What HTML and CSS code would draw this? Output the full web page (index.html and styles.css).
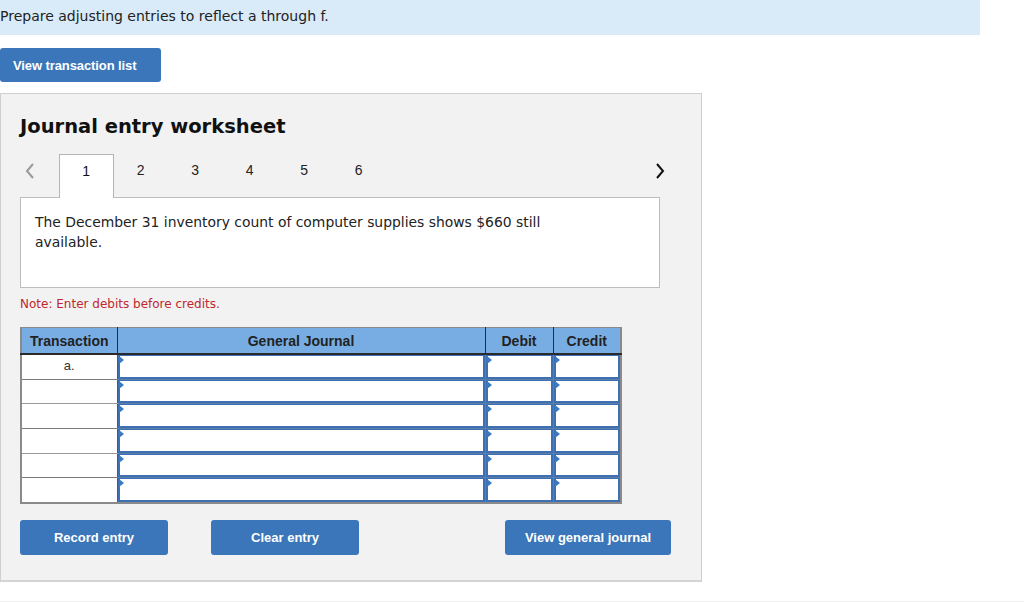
FILE: index.html
```html
<!DOCTYPE html>
<html>
<head>
<meta charset="utf-8">
<link rel="stylesheet" href="styles.css">
</head>
<body>
<div class="banner">Prepare adjusting entries to reflect a through f.</div>
<div class="top-row"><button class="btn btn-list">View transaction list</button></div>
<div class="panel">
  <h2 class="title">Journal entry worksheet</h2>
  <div class="tabs">
    <span class="nav prev"><svg width="12" height="18" viewBox="0 0 12 18"><polyline points="9,2 3,9 9,16" fill="none" stroke="#9a9a9a" stroke-width="2"/></svg></span>
    <span class="tab active">1</span>
    <span class="tab">2</span>
    <span class="tab">3</span>
    <span class="tab">4</span>
    <span class="tab">5</span>
    <span class="tab">6</span>
    <span class="spacer"></span>
    <span class="nav next"><svg width="12" height="18" viewBox="0 0 12 18"><polyline points="3,2 9,9 3,16" fill="none" stroke="#111" stroke-width="2"/></svg></span>
  </div>
  <div class="desc">The December 31 inventory count of computer supplies shows $660 still available.</div>
  <div class="note">Note: Enter debits before credits.</div>
  <table class="journal">
    <colgroup><col class="c-tr"><col class="c-gj"><col class="c-dr"><col class="c-cr"></colgroup>
    <thead>
      <tr><th>Transaction</th><th>General Journal</th><th>Debit</th><th>Credit</th></tr>
    </thead>
    <tbody>
      <tr><td class="tr">a.</td><td class="in"><div class="box"></div></td><td class="in"><div class="box"></div></td><td class="in"><div class="box"></div></td></tr>
      <tr><td class="tr"></td><td class="in"><div class="box"></div></td><td class="in"><div class="box"></div></td><td class="in"><div class="box"></div></td></tr>
      <tr><td class="tr"></td><td class="in"><div class="box"></div></td><td class="in"><div class="box"></div></td><td class="in"><div class="box"></div></td></tr>
      <tr><td class="tr"></td><td class="in"><div class="box"></div></td><td class="in"><div class="box"></div></td><td class="in"><div class="box"></div></td></tr>
      <tr><td class="tr"></td><td class="in"><div class="box"></div></td><td class="in"><div class="box"></div></td><td class="in"><div class="box"></div></td></tr>
      <tr><td class="tr"></td><td class="in"><div class="box"></div></td><td class="in"><div class="box"></div></td><td class="in"><div class="box"></div></td></tr>
    </tbody>
  </table>
  <div class="actions">
    <button class="btn btn-act">Record entry</button>
    <button class="btn btn-act btn-clear">Clear entry</button>
    <span class="spacer"></span>
    <button class="btn btn-act btn-view">View general journal</button>
  </div>
</div>
<div class="footer-line"></div>
</body>
</html>
```

FILE: styles.css
```css
html, body {
  margin: 0;
  padding: 0;
  background: #fff;
}
body {
  font-family: "DejaVu Sans", Verdana, sans-serif;
  color: #222;
  width: 1024px;
  height: 602px;
  overflow: hidden;
}
.banner {
  width: 980px;
  height: 35px;
  background: #d9eaf8;
  font-size: 14px;
  line-height: 33px;
  color: #222;
}
.top-row {
  padding-top: 13px;
  height: 34px;
}
.btn {
  background: #3a76b9;
  color: #fff;
  border: none;
  border-radius: 3px;
  font-family: "Liberation Sans", Arial, sans-serif;
  font-weight: bold;
  font-size: 13px;
  padding: 0;
  height: 35px;
  cursor: pointer;
}
.btn-list {
  width: 161px;
  height: 34px;
  text-align: left;
  padding-left: 13px;
  letter-spacing: -0.1px;
}
.panel {
  margin-top: 11px;
  height: 486px;
  background: #f2f2f2;
  border: 1px solid #cfcfcf;
  border-bottom: 2px solid #d4d4d4;
  padding: 0 0 0 19px;
  box-sizing: content-box;
  width: 681px;
}
.title {
  margin: 0;
  padding-top: 21px;
  font-size: 19.5px;
  line-height: 24px;
  font-weight: bold;
  color: #111;
  height: 39px;
}
.tabs {
  display: flex;
  align-items: stretch;
  height: 43px;
  width: 646px;
  position: relative;
  z-index: 1;
}
.nav {
  display: flex;
  align-items: center;
  height: 33px;
}
.prev {
  width: 39px;
  padding-left: 4px;
  box-sizing: border-box;
}
.tab {
  width: 54.5px;
  text-align: center;
  font-family: "Liberation Sans", Arial, sans-serif;
  font-size: 14px;
  line-height: 33px;
  color: #222;
  box-sizing: border-box;
}
.tab.active {
  background: #fff;
  border: 1px solid #b5b5b5;
  border-bottom: none;
  height: 44px;
  color: #111;
}
.spacer {
  flex: 1;
}
.next {
  width: 12px;
}
.desc {
  width: 640px;
  height: 91px;
  box-sizing: border-box;
  background: #fff;
  border: 1px solid #bdbdbd;
  padding: 14px 100px 0 14px;
  font-size: 13.9px;
  line-height: 20px;
  color: #222;
}
.note {
  color: #c0272d;
  font-size: 12px;
  line-height: 16px;
  margin-top: 8px;
  height: 16px;
}
.journal {
  margin-top: 15px;
  border-collapse: collapse;
  border: 2px solid #8a8a8a;
  border-top-width: 1px;
  table-layout: fixed;
  width: 600px;
}
.c-tr { width: 96px; }
.c-gj { width: 368px; }
.c-dr { width: 68px; }
.c-cr { width: 68px; }
.journal th {
  background: #78ade4;
  font-family: "Liberation Sans", Arial, sans-serif;
  font-weight: bold;
  font-size: 14px;
  color: #222;
  height: 25px;
  padding: 0;
  border-right: 1px solid #2b2b2b;
  border-bottom: 2px solid #2b2b2b;
}
.journal th:last-child {
  border-right: none;
}
.journal td {
  height: 23.7px;
  padding: 0;
  background: #fff;
}
.journal td.tr {
  border-bottom: 1px solid #7a7a7a;
  border-right: 1px solid #2f5f9a;
  font-family: "Liberation Sans", Arial, sans-serif;
  font-size: 13px;
  text-align: center;
  color: #333;
  vertical-align: top;
  line-height: 22px;
}
.journal tr:nth-child(2) td.tr,
.journal tr:nth-child(4) td.tr {
  border-bottom-color: #9a9a9a;
}
.journal td.in {
  border: 1px solid #5f7ea5;
  border-top: none;
  border-left: none;
  background: #5f7ea5;
}
.box {
  position: relative;
  height: 23.7px;
  box-sizing: border-box;
  background: #fff;
  border: 2px solid #3c70b2;
  border-top-width: 1px;
}
.box::before {
  content: "";
  position: absolute;
  left: -1px;
  top: 0;
  border-left: 5px solid #3a7ac4;
  border-top: 4px solid transparent;
  border-bottom: 4px solid transparent;
}
.actions {
  display: flex;
  width: 651px;
  margin-top: 16px;
}
.btn-act {
  width: 148px;
  height: 35px;
}
.btn-clear {
  margin-left: 43px;
}
.btn-view {
  width: 166px;
}
.footer-line {
  margin-top: 19px;
  width: 1024px;
  border-top: 1px solid #eeeeee;
}
```
